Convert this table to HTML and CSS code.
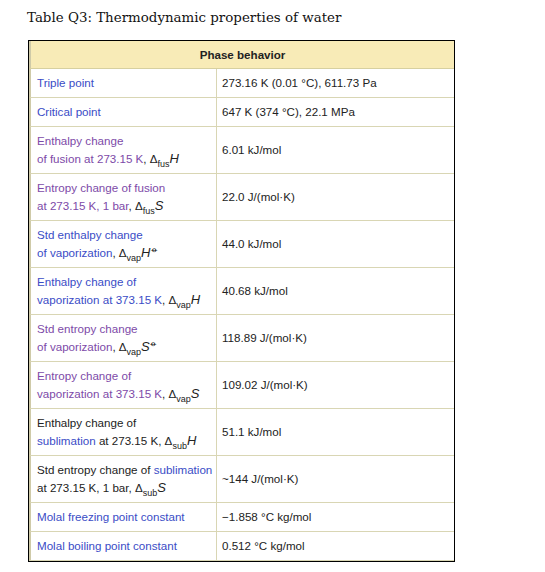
FILE: index.html
```html
<!DOCTYPE html>
<html>
<head>
<meta charset="utf-8">
<link rel="stylesheet" href="styles.css">
</head>
<body>
<div class="page">
  <h1 class="title">Table Q3: Thermodynamic properties of water</h1>
  <table class="props">
    <colgroup>
      <col class="c-name">
      <col class="c-val">
    </colgroup>
    <thead>
      <tr><th colspan="2">Phase behavior</th></tr>
    </thead>
    <tbody>
      <tr><td><span class="lk">Triple point</span></td><td>273.16 K (0.01 °C), 611.73 Pa</td></tr>
      <tr><td><span class="lk">Critical point</span></td><td>647 K (374 °C), 22.1 MPa</td></tr>
      <tr><td><span class="vs">Enthalpy change<br>of fusion at 273.15 K</span>, Δ<sub>fus</sub><i>H</i></td><td>6.01 kJ/mol</td></tr>
      <tr><td><span class="vs">Entropy change of fusion<br>at 273.15 K, 1 bar</span>, Δ<sub>fus</sub><i>S</i></td><td>22.0 J/(mol·K)</td></tr>
      <tr><td><span class="lk">Std enthalpy change<br>of vaporization</span>, Δ<sub>vap</sub><i>H</i><sup>⦵</sup></td><td>44.0 kJ/mol</td></tr>
      <tr><td><span class="lk">Enthalpy change of<br>vaporization at 373.15 K</span>, Δ<sub>vap</sub><i>H</i></td><td>40.68 kJ/mol</td></tr>
      <tr><td><span class="vs">Std entropy change<br>of vaporization</span>, Δ<sub>vap</sub><i>S</i><sup>⦵</sup></td><td>118.89 J/(mol·K)</td></tr>
      <tr><td><span class="vs">Entropy change of<br>vaporization at 373.15 K</span>, Δ<sub>vap</sub><i>S</i></td><td>109.02 J/(mol·K)</td></tr>
      <tr><td>Enthalpy change of<br><span class="lk">sublimation</span> at 273.15 K, Δ<sub>sub</sub><i>H</i></td><td>51.1 kJ/mol</td></tr>
      <tr><td>Std entropy change of <span class="lk">sublimation</span><br>at 273.15 K, 1 bar, Δ<sub>sub</sub><i>S</i></td><td>~144 J/(mol·K)</td></tr>
      <tr><td><span class="lk">Molal freezing point constant</span></td><td>−1.858 °C kg/mol</td></tr>
      <tr><td><span class="lk">Molal boiling point constant</span></td><td>0.512 °C kg/mol</td></tr>
    </tbody>
  </table>
</div>
</body>
</html>
```

FILE: styles.css
```css
html, body {
  margin: 0;
  padding: 0;
  background: #ffffff;
}

.page {
  padding: 9px 0 0 27px;
}

.title {
  margin: 0 0 14px 0;
  font-family: "DejaVu Serif", "Liberation Serif", serif;
  font-weight: normal;
  font-size: 13.4px;
  line-height: 17px;
  color: #111111;
}

.props {
  margin-left: 1px;
  width: 427px;
  border: 1px solid #000000;
  border-spacing: 0;
  font-family: "Liberation Sans", Arial, sans-serif;
  font-size: 11.6px;
  color: #222222;
  table-layout: fixed;
}

.c-name {
  width: 187px;
}

.c-val {
  width: 238px;
}

.props th {
  background: #f8ebb7;
  font-weight: bold;
  text-align: center;
  height: 27px;
  padding: 0;
  border-left: 2px solid #cfcaa8;
  border-bottom: 1px solid #d7d0a0;
  color: #222222;
}

.props td {
  padding: 5px 4px 5px 6px;
  line-height: 18px;
  vertical-align: middle;
  border-bottom: 1px solid #d9d6b4;
  text-align: left;
  white-space: nowrap;
}

.props td:first-child {
  border-left: 2px solid #cfcaa8;
}

.props td + td {
  border-left: 1px solid #d9d6b4;
  padding-left: 5px;
}

.lk {
  color: #3a4cc6;
}

.vs {
  color: #7d4aa8;
}

sub {
  font-size: 9px;
  vertical-align: -4px;
  line-height: 0;
}

sup {
  font-size: 9px;
  vertical-align: 5px;
  line-height: 0;
  font-family: "DejaVu Sans", sans-serif;
}

i {
  font-size: 13px;
}
```
